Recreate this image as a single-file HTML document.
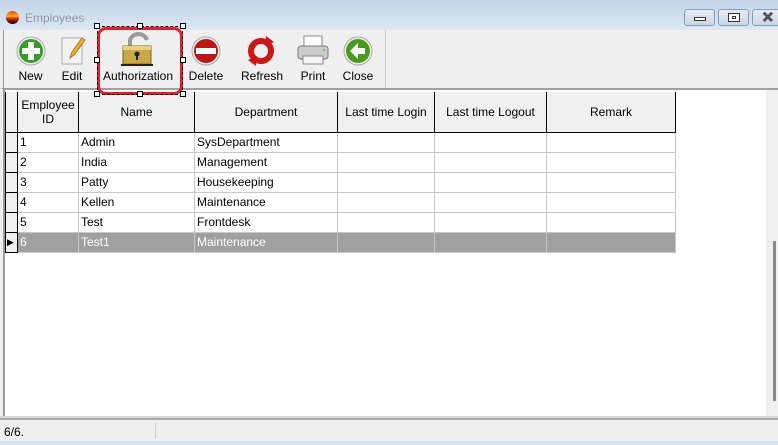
<!DOCTYPE html>
<html><head><meta charset="utf-8"><style>
*{margin:0;padding:0;box-sizing:border-box}
body{width:778px;height:445px;overflow:hidden;background:#efefef;font-family:"Liberation Sans",Arial,sans-serif;font-size:12px;position:relative}
.abs{position:absolute}
.title{left:0;top:0;width:778px;height:30px;background:linear-gradient(#c3d4e6,#dbe7f3)}
.tbtn{top:9px;width:31px;height:17px;border:1px solid #8a9bb3;border-radius:3px;background:linear-gradient(#e4ecf5,#c8d6e6)}
.lbl{top:69px;font-size:12px;color:#000;text-align:center}
table{border-collapse:collapse;position:absolute;left:5px;top:92px;table-layout:fixed}
td{height:20px;border:1px solid #c8c8c8;padding:0 2px;font-size:12px;white-space:nowrap;overflow:hidden;background:#fff}
th{height:40px;border:1px solid #000;border-top:none;background:#f0f0f0;font-weight:normal;font-size:12px;line-height:14px}
td.ind{background:#f0f0f0;border:1px solid #000;border-top:none}
tr.sel td{background:#a0a0a0;color:#fff}
.h{width:6px;height:6px;background:#fff;border:1px solid #000}
</style></head><body>
<div class="abs title"></div>
<div class="abs" style="left:6px;top:11px;width:13px;height:13px;border-radius:50%;background:linear-gradient(#f04020 0,#f8b020 40%,#d02010 60%,#000 100%)"></div>
<div class="abs" style="left:25px;top:11px;color:#8e9aa8;font-size:12px">Employees</div>
<div class="abs tbtn" style="left:684px"><div class="abs" style="left:9px;top:7px;width:12px;height:4px;border:1px solid #333;background:#fff"></div></div>
<div class="abs tbtn" style="left:718px"><div class="abs" style="left:9px;top:3px;width:12px;height:9px;border:1px solid #333;background:#fff"><div class="abs" style="left:3px;top:2px;width:4px;height:3px;border:1px solid #333"></div></div></div>
<div class="abs tbtn" style="left:752px;width:30px;font-size:14px;font-weight:bold;color:#fff;padding-left:9px;line-height:15px;-webkit-text-stroke:1px #555">✕</div>

<div class="abs" style="left:3px;top:30px;width:383px;height:59px;border-left:1px solid #9a9a9a;border-bottom:1px solid #9a9a9a;border-right:1px solid #c9c9c9"></div>

<svg class="abs" style="left:0;top:30px" width="390" height="40">
 <circle cx="31" cy="21" r="14" fill="#eee" stroke="#aaa"/><circle cx="31" cy="21" r="12" fill="#3a9a2a"/><path d="M28 12h6v6h6v6h-6v6h-6v-6h-6v-6h6z" fill="#fff"/>
 <rect x="62" y="8" width="20" height="26" fill="#f3f3f3" stroke="#aaa"/><path d="M70 28l2-6 10-14 3 2-10 14z" fill="#f0b030" stroke="#b07020"/>
 <path d="M130 16v-6a9 9 0 0 1 17 0" fill="none" stroke="#999" stroke-width="4"/><rect x="123" y="16" width="28" height="18" fill="#c9a848" stroke="#7a6020"/><rect x="123" y="16" width="28" height="4" fill="#e8d080"/><circle cx="137" cy="24" r="2.5" fill="#222"/><rect x="136" y="25" width="2" height="5" fill="#222"/><rect x="121" y="34" width="32" height="2" fill="#222"/>
 <circle cx="206" cy="21" r="14" fill="#eee" stroke="#aaa"/><circle cx="206" cy="21" r="12" fill="#b81818"/><rect x="196" y="18" width="20" height="6" fill="#fff"/>
 <circle cx="261" cy="21" r="10" fill="none" stroke="#c81818" stroke-width="6"/><path d="M266 6l8 6-9 4zM256 36l-8-6 9-4z" fill="#c81818"/>
 <rect x="304" y="6" width="18" height="12" fill="#fff" stroke="#888"/><rect x="298" y="16" width="30" height="13" rx="3" fill="#ccc" stroke="#777"/><rect x="303" y="26" width="20" height="8" fill="#f4f4f4" stroke="#888"/><circle cx="324" cy="20" r="1" fill="#3c3"/>
 <circle cx="358" cy="21" r="14" fill="#eee" stroke="#aaa"/><circle cx="358" cy="21" r="12" fill="#4a9a20"/><path d="M350 21l8-8v5h7v6h-7v5z" fill="#fff"/>
</svg>
<div class="abs lbl" style="left:13px;width:35px">New</div>
<div class="abs lbl" style="left:57px;width:30px">Edit</div>
<div class="abs lbl" style="left:100px;width:76px">Authorization</div>
<div class="abs lbl" style="left:186px;width:40px">Delete</div>
<div class="abs lbl" style="left:237px;width:50px">Refresh</div>
<div class="abs lbl" style="left:297px;width:32px">Print</div>
<div class="abs lbl" style="left:338px;width:40px">Close</div>

<div class="abs" style="left:0;top:88px;width:778px;height:332px;background:#fff;border-top:2px solid #a0a0a0;border-left:5px solid #f0f0f0"></div>
<div class="abs" style="left:3px;top:88px;width:2px;height:330px;background:#9a9a9a"></div>
<div class="abs" style="left:766px;top:90px;width:12px;height:330px;background:#f0f0f0"></div>
<div class="abs" style="left:773px;top:241px;width:3px;height:160px;background:#8a8a8a"></div>
<div class="abs" style="left:0;top:416px;width:778px;height:2px;background:#d8d8d8"></div>
<div class="abs" style="left:0;top:418px;width:778px;height:2px;background:#a8a8a8"></div>

<table>
<colgroup><col style="width:12px"><col style="width:61px"><col style="width:116px"><col style="width:143px"><col style="width:97px"><col style="width:112px"><col style="width:129px"></colgroup>
<tr><th style="border-left:1px solid #000"></th><th>Employee<br>ID</th><th>Name</th><th>Department</th><th>Last time Login</th><th>Last time Logout</th><th>Remark</th></tr>
<tr><td class="ind"></td><td>1</td><td>Admin</td><td>SysDepartment</td><td></td><td></td><td></td></tr>
<tr><td class="ind"></td><td>2</td><td>India</td><td>Management</td><td></td><td></td><td></td></tr>
<tr><td class="ind"></td><td>3</td><td>Patty</td><td>Housekeeping</td><td></td><td></td><td></td></tr>
<tr><td class="ind"></td><td>4</td><td>Kellen</td><td>Maintenance</td><td></td><td></td><td></td></tr>
<tr><td class="ind"></td><td>5</td><td>Test</td><td>Frontdesk</td><td></td><td></td><td></td></tr>
<tr class="sel"><td class="ind" style="background:#f0f0f0;color:#000;font-size:9px;padding:0 1px">▶</td><td>6</td><td>Test1</td><td>Maintenance</td><td></td><td></td><td></td></tr>
</table>

<div class="abs" style="left:4px;top:425px;font-size:12px">6/6.</div>
<div class="abs" style="left:155px;top:423px;width:1px;height:16px;background:#c8c8c8"></div>
<div class="abs" style="left:0;top:441px;width:778px;height:4px;background:#d6e2ef"></div>

<div class="abs" style="left:97px;top:27px;width:86px;height:68px;border:3px solid #e0202a;border-radius:9px"></div>
<div class="abs" style="left:97px;top:26px;width:86px;height:69px;border:1px dashed #000"></div>
<div class="abs h" style="left:94px;top:23px"></div><div class="abs h" style="left:137px;top:23px"></div><div class="abs h" style="left:180px;top:23px"></div>
<div class="abs h" style="left:94px;top:57px"></div><div class="abs h" style="left:180px;top:57px"></div>
<div class="abs h" style="left:94px;top:91px"></div><div class="abs h" style="left:137px;top:91px"></div><div class="abs h" style="left:180px;top:91px"></div>
</body></html>
